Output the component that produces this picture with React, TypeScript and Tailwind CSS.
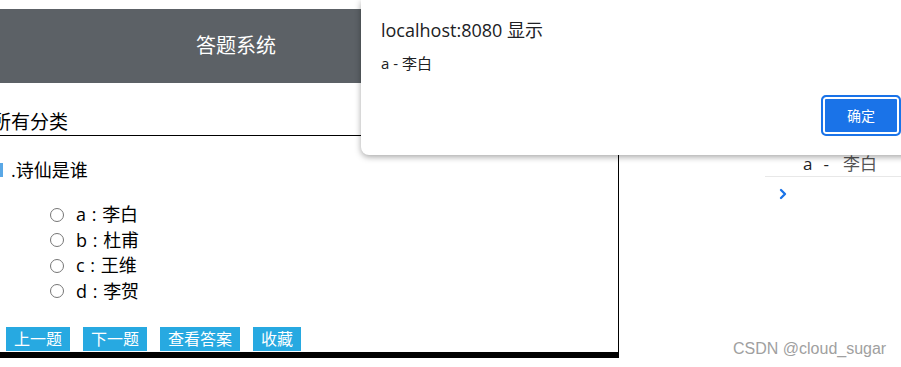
import { ChevronRight } from "lucide-react";

const options = [
  { key: "a", text: "李白" },
  { key: "b", text: "杜甫" },
  { key: "c", text: "王维" },
  { key: "d", text: "李贺" },
];

const actions = ["上一题", "下一题", "查看答案", "收藏"];

function QuizPanel() {
  return (
    <div className="w-[619px] h-[358px] shrink-0 border-r border-b-[6px] border-black pt-[9px] overflow-hidden">
      <div className="h-[74px] bg-[#5c6166] flex items-center pl-[196px]">
        <span className="text-[20px] text-white">答题系统</span>
      </div>

      <div className="mt-[24px] border-b border-black h-[29px] flex items-end">
        <span className="text-[19px] leading-[26px] text-black ml-[-8px]">所有分类</span>
      </div>

      <div className="mt-[24px] flex items-center h-[20px]">
        <span className="w-[3px] h-[14px] bg-[#5aa8e6]" />
        <span className="ml-[8px] text-[18px] text-black">.诗仙是谁</span>
      </div>

      <ul className="mt-[22px] pl-[50px] flex flex-col">
        {options.map((o) => (
          <li key={o.key} className="flex items-center h-[25.5px]">
            <span className="w-[14px] h-[14px] rounded-full border border-[#767676] bg-white" />
            <span className="ml-[12px] text-[18px] text-black">
              {o.key} <span className="mx-[1px]">:</span> {o.text}
            </span>
          </li>
        ))}
      </ul>

      <div className="mt-[23px] pl-[6px] flex gap-[13px]">
        {actions.map((a) => (
          <button
            key={a}
            className="h-[24px] px-[8px] bg-[#27a9e1] text-white text-[16px] leading-[24px] flex items-center"
          >
            {a}
          </button>
        ))}
      </div>
    </div>
  );
}

function ConsolePane() {
  return (
    <div className="flex-1 pt-[151px] pl-[146px]">
      <div className="h-[26px] border-b border-[#e8e8e8] flex items-center pl-[38px] text-[17px] text-[#202124]">
        <span>a</span>
        <span className="ml-[11px]">-</span>
        <span className="ml-[14px] text-[#555]">李白</span>
      </div>
      <ChevronRight className="mt-[9px] ml-[10px] w-[16px] h-[16px] text-[#1a73e8]" strokeWidth={3.5} />
    </div>
  );
}

function AlertDialog() {
  return (
    <div className="absolute left-[361px] top-0 w-[560px] h-[155px] bg-white rounded-b-[8px] shadow-[0_2px_6px_rgba(0,0,0,0.35)] pl-[20px] pt-[16px]">
      <div className="text-[18px] text-[#202124] leading-[28px]">localhost:8080 显示</div>
      <div className="mt-[8px] text-[15px] text-[#202124] leading-[22px]">a - 李白</div>
      <button className="absolute left-[460px] top-[95px] w-[80px] h-[41px] rounded-[5px] bg-[#1a73e8] border-2 border-[#1a73e8] shadow-[inset_0_0_0_2px_white] text-white text-[14px]">
        确定
      </button>
    </div>
  );
}

export default function App() {
  return (
    <div
      className="relative w-[901px] h-[367px] bg-white overflow-hidden"
      style={{ fontFamily: '"Open Sans", "Noto Sans CJK SC", sans-serif' }}
    >
      <div className="flex">
        <QuizPanel />
        <ConsolePane />
      </div>
      <AlertDialog />
      <div className="absolute left-[733px] top-[337px] text-[16px] text-[#a0a0a0] font-['Liberation_Sans',sans-serif]">
        CSDN @cloud_sugar
      </div>
    </div>
  );
}
